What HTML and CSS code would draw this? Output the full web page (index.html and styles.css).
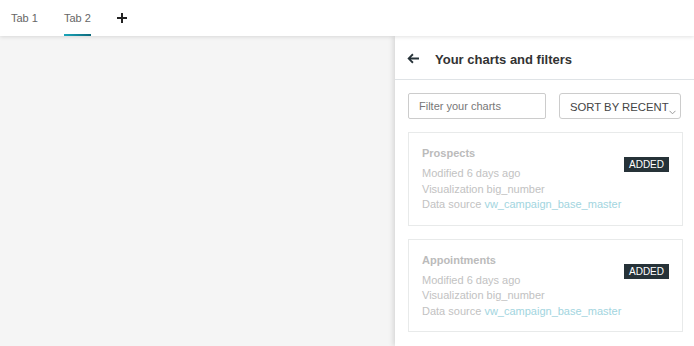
FILE: index.html
```html
<!DOCTYPE html>
<html lang="en">
<head>
  <meta charset="UTF-8">
  <title>Dashboard - Tab 2</title>
  <link rel="stylesheet" href="styles.css">
</head>
<body>
  <header class="tabs">
    <span class="tab">Tab 1</span>
    <span class="tab active">Tab 2</span>
    <span class="tab add">
      <svg width="10" height="10" viewBox="0 0 10 10"><path d="M4 0h2v4h4v2H6v4H4V6H0V4h4z" fill="#222"/></svg>
    </span>
  </header>

  <main class="layout">
    <section class="canvas"></section>

    <aside class="panel">
      <div class="panel-head">
        <svg class="back" width="12" height="11" viewBox="0 0 12 11"><path d="M5.3 0.6l1.3 1.3-2.7 2.7H12v1.8H3.9l2.7 2.7-1.3 1.3L0.4 5.5z" fill="#263238"/></svg>
        <h2>Your charts and filters</h2>
      </div>

      <div class="controls">
        <input type="text" class="filter" placeholder="Filter your charts">
        <div class="sort">
          SORT BY RECENT
          <svg class="caret" width="7" height="5" viewBox="0 0 7 5"><path d="M0.5 0.8l3 3 3-3" fill="none" stroke="#999" stroke-width="1"/></svg>
        </div>
      </div>

      <div class="card">
        <div class="info">
          <h3>Prospects</h3>
          <p>Modified 6 days ago</p>
          <p>Visualization big_number</p>
          <p>Data source <a href="#">vw_campaign_base_master</a></p>
        </div>
        <span class="badge">ADDED</span>
      </div>

      <div class="card">
        <div class="info">
          <h3>Appointments</h3>
          <p>Modified 6 days ago</p>
          <p>Visualization big_number</p>
          <p>Data source <a href="#">vw_campaign_base_master</a></p>
        </div>
        <span class="badge">ADDED</span>
      </div>
    </aside>
  </main>
</body>
</html>
```

FILE: styles.css
```css
body {
  margin: 0;
  font-family: 'Liberation Sans', Arial, sans-serif;
  background: #f5f5f5;
  color: #333;
  height: 100vh;
  display: flex;
  flex-direction: column;
  overflow: hidden;
}

.tabs {
  flex-shrink: 0;
  box-sizing: border-box;
  height: 36px;
  background: #fff;
  display: flex;
  align-items: stretch;
  padding-left: 11px;
  box-shadow: 0 1px 4px rgba(0, 0, 0, 0.12);
  position: relative;
  z-index: 2;
}

.tab {
  font-size: 11px;
  color: #666;
  display: flex;
  align-items: center;
  margin-right: 26px;
  border-bottom: 2px solid transparent;
  padding-top: 2px;
}

.tab.active {
  border-bottom: 2px solid #11879b;
  border-image: linear-gradient(90deg, #1ba9bd, #0d6679) 1;
}

.layout {
  flex: 1;
  display: flex;
  min-height: 0;
}

.canvas {
  flex: 1;
}

.panel {
  width: 299px;
  background: #fff;
  box-shadow: -2px 0 5px rgba(0, 0, 0, 0.12);
  position: relative;
  z-index: 1;
}

.panel-head {
  box-sizing: border-box;
  height: 44px;
  padding: 3px 13px 0;
  border-bottom: 1px solid #dfe3e6;
  display: flex;
  align-items: center;
}

.back {
  margin-left: -1px;
  margin-top: -1px;
}

.panel-head h2 {
  margin: 0 0 0 16px;
  font-size: 13px;
  font-weight: bold;
  color: #333;
}

.controls {
  display: flex;
  gap: 13px;
  padding: 13px 0 0 13px;
}

.filter {
  box-sizing: border-box;
  width: 138px;
  height: 26px;
  border: 1px solid #ccc;
  border-radius: 2px;
  padding: 0 10px;
  font-family: inherit;
  font-size: 11px;
  color: #333;
  outline: none;
}

.filter::placeholder {
  color: #777;
}

.sort {
  box-sizing: border-box;
  width: 122px;
  height: 26px;
  border: 1px solid #ccc;
  border-radius: 3px;
  font-size: 11.3px;
  color: #444;
  display: flex;
  align-items: center;
  padding-left: 10px;
  padding-top: 1px;
  position: relative;
}

.caret {
  position: absolute;
  right: 4px;
  bottom: 3px;
}

.card {
  margin: 13px 11px 0 13px;
  border: 1px solid #e8eaea;
  padding: 12px 13px 12px 13px;
  display: flex;
  justify-content: space-between;
  align-items: flex-start;
}

.info {
  min-width: 0;
  white-space: nowrap;
}

.card h3 {
  margin: 0 0 5px;
  font-size: 11px;
  line-height: 16px;
  color: #bbb;
}

.card p {
  margin: 0;
  font-size: 11px;
  line-height: 15.5px;
  color: #c2c2c2;
}

.card a {
  color: #a2d5e0;
  text-decoration: none;
}

.badge {
  flex-shrink: 0;
  margin-top: 12px;
  background: #263238;
  color: #fff;
  font-size: 10px;
  line-height: 15px;
  padding: 0 5px;
}
```
